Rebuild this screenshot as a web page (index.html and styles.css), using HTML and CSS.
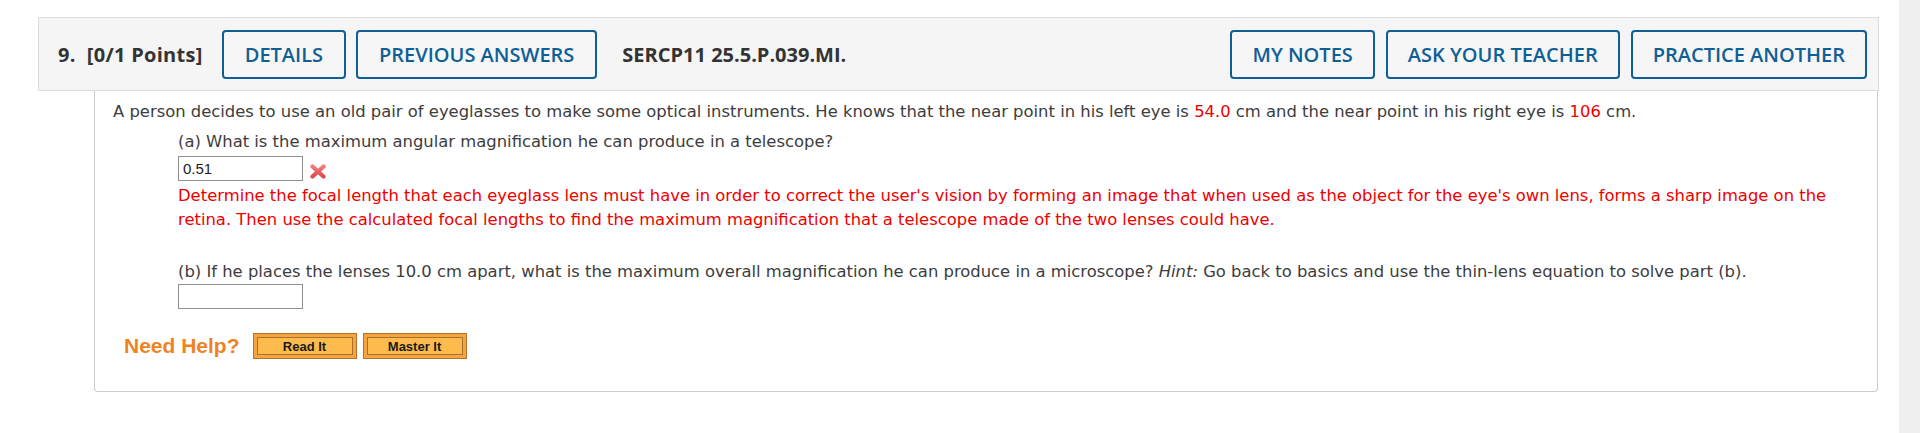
FILE: index.html
```html
<!DOCTYPE html>
<html>
<head>
<meta charset="utf-8">
<link rel="stylesheet" href="styles.css">
</head>
<body>
<div class="page">
  <div class="main">
    <div class="question">
      <div class="qhead">
        <div class="qnum">9.&nbsp; [0/1 Points]</div>
        <button class="hbtn hbtn-first">DETAILS</button>
        <button class="hbtn">PREVIOUS ANSWERS</button>
        <div class="qcode">SERCP11 25.5.P.039.MI.</div>
        <div class="spacer"></div>
        <button class="hbtn hbtn-r">MY NOTES</button>
        <button class="hbtn hbtn-r">ASK YOUR TEACHER</button>
        <button class="hbtn hbtn-r">PRACTICE ANOTHER</button>
      </div>
      <div class="qbody">
        <p class="intro">A person decides to use an old pair of eyeglasses to make some optical instruments. He knows that the near point in his left eye is <span class="red">54.0</span> cm and the near point in his right eye is <span class="red">106</span> cm.</p>
        <div class="part">
          <p class="prompt">(a) What is the maximum angular magnification he can produce in a telescope?</p>
          <div class="answer-row">
            <div class="answer">0.51</div>
            <svg class="xmark" width="18" height="15" viewBox="0 0 18 15">
              <defs>
                <linearGradient id="xg" x1="0" y1="0" x2="0" y2="1">
                  <stop offset="0" stop-color="#f27a7c"/>
                  <stop offset="1" stop-color="#e04b50"/>
                </linearGradient>
              </defs>
              <path d="M3.5 2.5 L14.5 12.5 M14.5 2.5 L3.5 12.5" stroke="url(#xg)" stroke-width="4.2" stroke-linecap="round"/>
            </svg>
          </div>
          <p class="hint">Determine the focal length that each eyeglass lens must have in order to correct the user's vision by forming an image that when used as the object for the eye's own lens, forms a sharp image on the retina. Then use the calculated focal lengths to find the maximum magnification that a telescope made of the two lenses could have.</p>
          <p class="prompt prompt-b">(b) If he places the lenses 10.0 cm apart, what is the maximum overall magnification he can produce in a microscope? <em>Hint:</em> Go back to basics and use the thin-lens equation to solve part (b).</p>
          <div class="answer-row answer-row-b">
            <div class="answer"></div>
          </div>
        </div>
        <div class="help">
          <span class="help-label">Need Help?</span>
          <span class="obtn obtn-read"><span class="obtn-inner">Read It</span></span>
          <span class="obtn"><span class="obtn-inner">Master It</span></span>
        </div>
      </div>
    </div>
  </div>
  <div class="sidebar"></div>
</div>
</body>
</html>
```

FILE: styles.css
```css
html, body {
  margin: 0;
  padding: 0;
  background: #ffffff;
}

.page {
  display: flex;
  min-height: 433px;
}

.main {
  flex: 1;
  padding: 17px 20px 0 38px;
}

.sidebar {
  width: 21px;
  background: #f0f0f0;
}

.qhead {
  display: flex;
  align-items: center;
  height: 72px;
  background: #f5f5f5;
  border: 1px solid #dddddd;
  padding: 0 11px 0 19px;
  font-family: "Open Sans", sans-serif;
}

.qnum {
  font-weight: 700;
  font-size: 20px;
  letter-spacing: 0.3px;
  color: #333333;
  margin-right: 19px;
  white-space: pre;
}

.qcode {
  font-weight: 700;
  font-size: 20px;
  color: #333333;
  margin-left: 25px;
}

.spacer {
  flex: 1;
}

.hbtn {
  height: 49px;
  box-sizing: border-box;
  border: 2px solid #0f5f97;
  border-radius: 4px;
  background: #f6f6f6;
  color: #0f5f97;
  font-family: "Open Sans", sans-serif;
  font-weight: 600;
  font-size: 20px;
  padding: 0 21px;
  margin-left: 10px;
}

.hbtn-r {
  padding: 0 20px;
  margin-left: 11px;
}

.hbtn-first {
  margin-left: 0;
}

.qbody {
  margin-left: 56px;
  margin-right: 1px;
  border: 1px solid #cccccc;
  border-top: none;
  border-radius: 0 0 4px 4px;
  padding: 12px 20px 32px 18px;
  font-family: "DejaVu Sans", Verdana, sans-serif;
  font-size: 16.4px;
  color: #3d3d3d;
}

.qbody p {
  margin: 0;
}

.intro {
  line-height: 18px;
}

.red {
  color: #ee0000;
}

.part {
  padding-left: 65px;
}

.prompt {
  line-height: 18px;
  margin-top: 12px !important;
}

.answer-row {
  display: flex;
  align-items: center;
  margin-top: 5px;
}

.answer {
  width: 119px;
  height: 23px;
  border: 1px solid #8f8f8f;
  background: #ffffff;
  font-family: "Liberation Sans", Arial, sans-serif;
  font-size: 15px;
  color: #222222;
  line-height: 23px;
  padding-left: 4px;
}

.xmark {
  margin-left: 6px;
  margin-top: 5px;
}

.hint {
  color: #ee0000;
  line-height: 24px;
  margin-top: 3px !important;
}

.prompt-b {
  margin-top: 31px !important;
}

.answer-row-b {
  margin-top: 3px;
}

.help {
  display: flex;
  align-items: center;
  margin-top: 24px;
  padding-left: 11px;
}

.help-label {
  font-family: "Liberation Sans", Arial, sans-serif;
  font-weight: 700;
  font-size: 21px;
  color: #ef831f;
  margin-right: 13px;
}

.obtn {
  display: flex;
  width: 104px;
  height: 26px;
  box-sizing: border-box;
  border: 1px solid #b8712a;
  background: #f6a440;
  padding: 3px;
}

.obtn-read {
  margin-right: 6px;
}

.obtn-inner {
  flex: 1;
  display: flex;
  align-items: center;
  justify-content: center;
  border: 1px solid #a8702e;
  background: #fdbb4d;
  font-family: "Liberation Sans", Arial, sans-serif;
  font-weight: 700;
  font-size: 13px;
  color: #1a1a1a;
}
```
